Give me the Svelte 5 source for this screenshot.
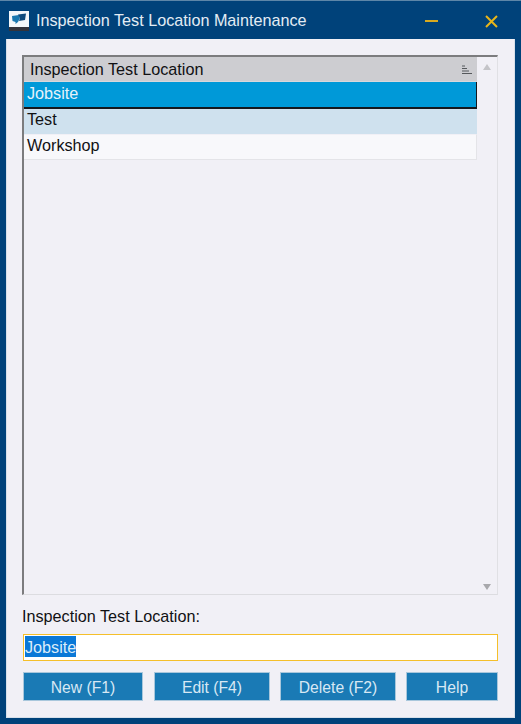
<script>
  const rows = [
    { name: 'Jobsite', cls: 'selected' },
    { name: 'Test', cls: 'alt' },
    { name: 'Workshop', cls: 'plain' }
  ];
  const buttons = [
    { label: 'New (F1)', width: 120 },
    { label: 'Edit (F4)', width: 116 },
    { label: 'Delete (F2)', width: 116 },
    { label: 'Help', width: 92 }
  ];
</script>

<div class="window">
  <div class="titlebar">
    <svg class="appicon" width="20" height="20" viewBox="0 0 20 20">
      <rect x="0" y="0" width="20" height="16" fill="#f4f7fa" />
      <rect x="0" y="16" width="20" height="4" fill="#33343c" />
      <path d="M3 5 L10 4 L11 7 L9 11 L6.5 13 L6.5 11 L3.5 10 Z" fill="#1a78b0" />
      <path d="M9 3.5 L17 2.5 L16 9 L10 10 L11 7 Z" fill="#0f4a7c" />
    </svg>
    <span class="title">Inspection Test Location Maintenance</span>
    <span class="minimize"></span>
    <svg class="close" width="13" height="13" viewBox="0 0 13 13">
      <path d="M1 1 L12 12 M12 1 L1 12" stroke="#e8b519" stroke-width="2" fill="none" />
    </svg>
  </div>

  <div class="body">
    <div class="listbox">
      <div class="table">
        <div class="header">
          <span>Inspection Test Location</span>
          <svg class="sorticon" width="11" height="10" viewBox="0 0 11 10">
            <path d="M0 1 H3 M0 3.5 H5 M0 6 H7 M0 8.5 H10" stroke="#55585c" stroke-width="1" fill="none" />
          </svg>
        </div>
        {#each rows as row}
          <div class="row {row.cls}">{row.name}</div>
        {/each}
      </div>
      <div class="scrollbar">
        <span class="arrow up"></span>
        <span class="arrow down"></span>
      </div>
    </div>

    <div class="label">Inspection Test Location:</div>
    <div class="input"><span class="selection">Jobsite</span></div>

    <div class="buttons">
      {#each buttons as b}
        <div class="button" style="width: {b.width}px">{b.label}</div>
      {/each}
    </div>
  </div>
</div>

<style>
  :global(body) {
    margin: 0;
    background: #00427a;
  }

  .window {
    width: 521px;
    height: 724px;
    box-sizing: border-box;
    display: flex;
    flex-direction: column;
    background: #00427a;
    border-top: 1px solid #5d86a8;
    padding: 0 6px 6px;
    font-family: "Liberation Sans", Arial, sans-serif;
    font-size: 16.2px;
    color: #111114;
  }

  .titlebar {
    height: 38px;
    flex: none;
    display: flex;
    align-items: center;
    padding-left: 3px;
  }

  .appicon {
    margin-top: 1px;
  }

  .title {
    margin-left: 7px;
    color: #e3ecf4;
    font-size: 16.2px;
    flex: 1;
  }

  .minimize {
    width: 13px;
    height: 2px;
    background: #d9a91f;
    margin: 2px 47px 0 0;
  }

  .close {
    margin: 2px 17px 0 0;
  }

  .body {
    flex: 1;
    background: #f1f0f6;
    border: 1px solid #d8e0ea;
    border-top: 0;
    padding: 16px 16px 0 15px;
    display: flex;
    flex-direction: column;
    box-sizing: border-box;
  }

  .listbox {
    height: 540px;
    box-sizing: border-box;
    display: flex;
    border-top: 2px solid #7c7c7e;
    border-left: 2px solid #7c7c7e;
    border-right: 1px solid #e0e0e4;
    border-bottom: 1px solid #dcdce0;
  }

  .table {
    width: 453px;
    flex: none;
  }

  .header {
    height: 25px;
    background: #cdcdd1;
    display: flex;
    align-items: center;
    justify-content: space-between;
    padding: 0 4px 0 6px;
    box-sizing: border-box;
    border-bottom: 1px solid #d8d8dc;
  }

  .sorticon {
    margin-top: 2px;
  }

  .row {
    height: 26px;
    line-height: 22px;
    padding-left: 3px;
    box-sizing: border-box;
  }

  .selected {
    height: 27px;
    background: #0099d8;
    color: #e6f2fa;
    border-bottom: 2px solid #14171c;
    border-right: 1px solid #14171c;
  }

  .alt {
    height: 25px;
    line-height: 21px;
    background: #cfe1ee;
  }

  .plain {
    line-height: 20px;
    background: #f8f8fb;
    border-top: 1px solid #f1f0f6;
    border-bottom: 1px solid #e4e4e8;
    border-right: 1px solid #e4e4e8;
  }

  .scrollbar {
    flex: 1;
    display: flex;
    flex-direction: column;
    justify-content: space-between;
    align-items: center;
    padding: 7px 0 4px;
  }

  .arrow {
    width: 0;
    height: 0;
    border-left: 4px solid transparent;
    border-right: 4px solid transparent;
  }

  .up {
    border-bottom: 6px solid #c4c4c8;
  }

  .down {
    border-top: 6px solid #a8a8ac;
  }

  .label {
    margin-top: 12px;
    height: 18px;
    line-height: 18px;
  }

  .input {
    margin: 9px 0 0 1px;
    height: 27px;
    box-sizing: border-box;
    background: #fff;
    border: 1px solid #f5bf2a;
    padding: 1px 0 0 1px;
    line-height: 23px;
  }

  .selection {
    display: inline-block;
    background: #0a78d7;
    color: #dcecfa;
    height: 21px;
  }

  .buttons {
    margin: 11px 0 0 1px;
    display: flex;
    gap: 10px;
  }

  .button {
    height: 29px;
    box-sizing: border-box;
    background: #1a7ab5;
    border: 1px solid #a9c7dc;
    color: #d7e8f4;
    text-align: center;
    line-height: 29px;
    font-size: 15.7px;
  }

  .button:first-child {
    margin-right: 1px;
  }
</style>
